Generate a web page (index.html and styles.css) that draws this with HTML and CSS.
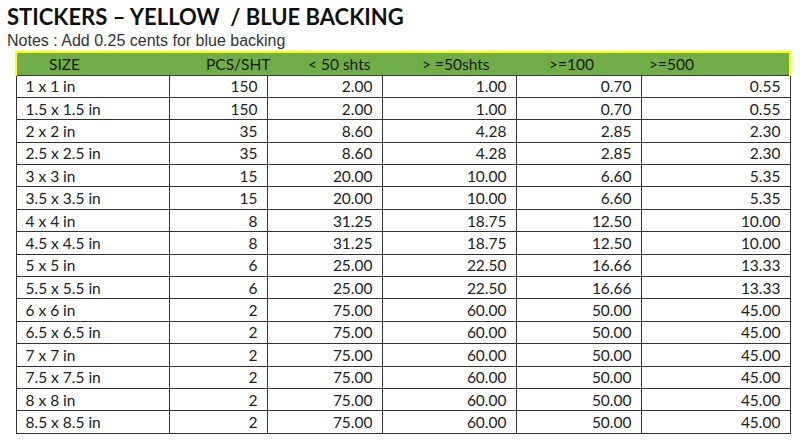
FILE: index.html
```html
<!DOCTYPE html>
<html>
<head>
<meta charset="utf-8">
<link rel="stylesheet" href="styles.css">
</head>
<body>
<div class="page">
  <h1 class="title">STICKERS – YELLOW &nbsp;/ BLUE BACKING</h1>
  <p class="notes">Notes : Add 0.25 cents for blue backing</p>
  <table class="prices">
    <colgroup>
      <col class="c1"><col class="c2"><col class="c3"><col class="c4"><col class="c5"><col class="c6">
    </colgroup>
    <thead>
      <tr>
        <th class="h1">SIZE</th>
        <th class="h2">PCS/SHT</th>
        <th class="h3">&lt; 50 shts</th>
        <th class="h4">&gt; =50shts</th>
        <th class="h5">&gt;=100</th>
        <th class="h6">&gt;=500</th>
      </tr>
    </thead>
    <tbody>
      <tr><td>1 x 1 in</td><td>150</td><td>2.00</td><td>1.00</td><td>0.70</td><td>0.55</td></tr>
      <tr><td>1.5 x 1.5 in</td><td>150</td><td>2.00</td><td>1.00</td><td>0.70</td><td>0.55</td></tr>
      <tr><td>2 x 2 in</td><td>35</td><td>8.60</td><td>4.28</td><td>2.85</td><td>2.30</td></tr>
      <tr><td>2.5 x 2.5 in</td><td>35</td><td>8.60</td><td>4.28</td><td>2.85</td><td>2.30</td></tr>
      <tr><td>3 x 3 in</td><td>15</td><td>20.00</td><td>10.00</td><td>6.60</td><td>5.35</td></tr>
      <tr><td>3.5 x 3.5 in</td><td>15</td><td>20.00</td><td>10.00</td><td>6.60</td><td>5.35</td></tr>
      <tr><td>4 x 4 in</td><td>8</td><td>31.25</td><td>18.75</td><td>12.50</td><td>10.00</td></tr>
      <tr><td>4.5 x 4.5 in</td><td>8</td><td>31.25</td><td>18.75</td><td>12.50</td><td>10.00</td></tr>
      <tr><td>5 x 5 in</td><td>6</td><td>25.00</td><td>22.50</td><td>16.66</td><td>13.33</td></tr>
      <tr><td>5.5 x 5.5 in</td><td>6</td><td>25.00</td><td>22.50</td><td>16.66</td><td>13.33</td></tr>
      <tr><td>6 x 6 in</td><td>2</td><td>75.00</td><td>60.00</td><td>50.00</td><td>45.00</td></tr>
      <tr><td>6.5 x 6.5 in</td><td>2</td><td>75.00</td><td>60.00</td><td>50.00</td><td>45.00</td></tr>
      <tr><td>7 x 7 in</td><td>2</td><td>75.00</td><td>60.00</td><td>50.00</td><td>45.00</td></tr>
      <tr><td>7.5 x 7.5 in</td><td>2</td><td>75.00</td><td>60.00</td><td>50.00</td><td>45.00</td></tr>
      <tr><td>8 x 8 in</td><td>2</td><td>75.00</td><td>60.00</td><td>50.00</td><td>45.00</td></tr>
      <tr><td>8.5 x 8.5 in</td><td>2</td><td>75.00</td><td>60.00</td><td>50.00</td><td>45.00</td></tr>
    </tbody>
  </table>
</div>
</body>
</html>
```

FILE: styles.css
```css
html, body {
  margin: 0;
  padding: 0;
  background: #ffffff;
}

.page {
  padding: 4px 0 0 7px;
}

.title {
  margin: 0;
  font-family: Lato, "Open Sans", sans-serif;
  font-weight: 700;
  font-size: 22px;
  line-height: 26px;
  color: #111111;
  white-space: pre;
}

.notes {
  margin: 2px 0 0 0;
  font-family: "Liberation Sans", Arial, sans-serif;
  font-size: 16px;
  line-height: 18px;
  color: #333333;
}

.prices {
  margin: 1px 0 0 8px;
  border-collapse: collapse;
  table-layout: fixed;
  width: 774px;
  font-family: Lato, "Open Sans", sans-serif;
  font-size: 15.5px;
  color: #222222;
}

.c1 { width: 153px; }
.c2 { width: 98px; }
.c3 { width: 115px; }
.c4 { width: 134px; }
.c5 { width: 125px; }
.c6 { width: 149px; }

.prices thead tr {
  height: 23px;
}

.prices th {
  background: #70ad47;
  border-top: 2px solid #ffff00;
  border-bottom: 1px solid #3a3a3a;
  font-weight: 400;
  text-align: left;
  padding: 0;
  color: #1a1a1a;
  white-space: nowrap;
}

.prices th.h1 { border-left: 2px solid #ffff00; padding-left: 32px; }
.prices th.h2 { padding-left: 37px; }
.prices th.h3 { padding-left: 41px; }
.prices th.h4 { padding-left: 40px; }
.prices th.h5 { padding-left: 33px; }
.prices th.h6 { border-right: 2px solid #ffff00; padding-left: 8px; }

.prices tbody tr {
  height: 22.4px;
}

.prices td {
  border: 1.5px solid #333333;
  padding: 0 9px 0 9px;
  text-align: right;
  white-space: nowrap;
  line-height: 18px;
}

.prices td:first-child {
  text-align: left;
  padding-left: 9px;
}
```
